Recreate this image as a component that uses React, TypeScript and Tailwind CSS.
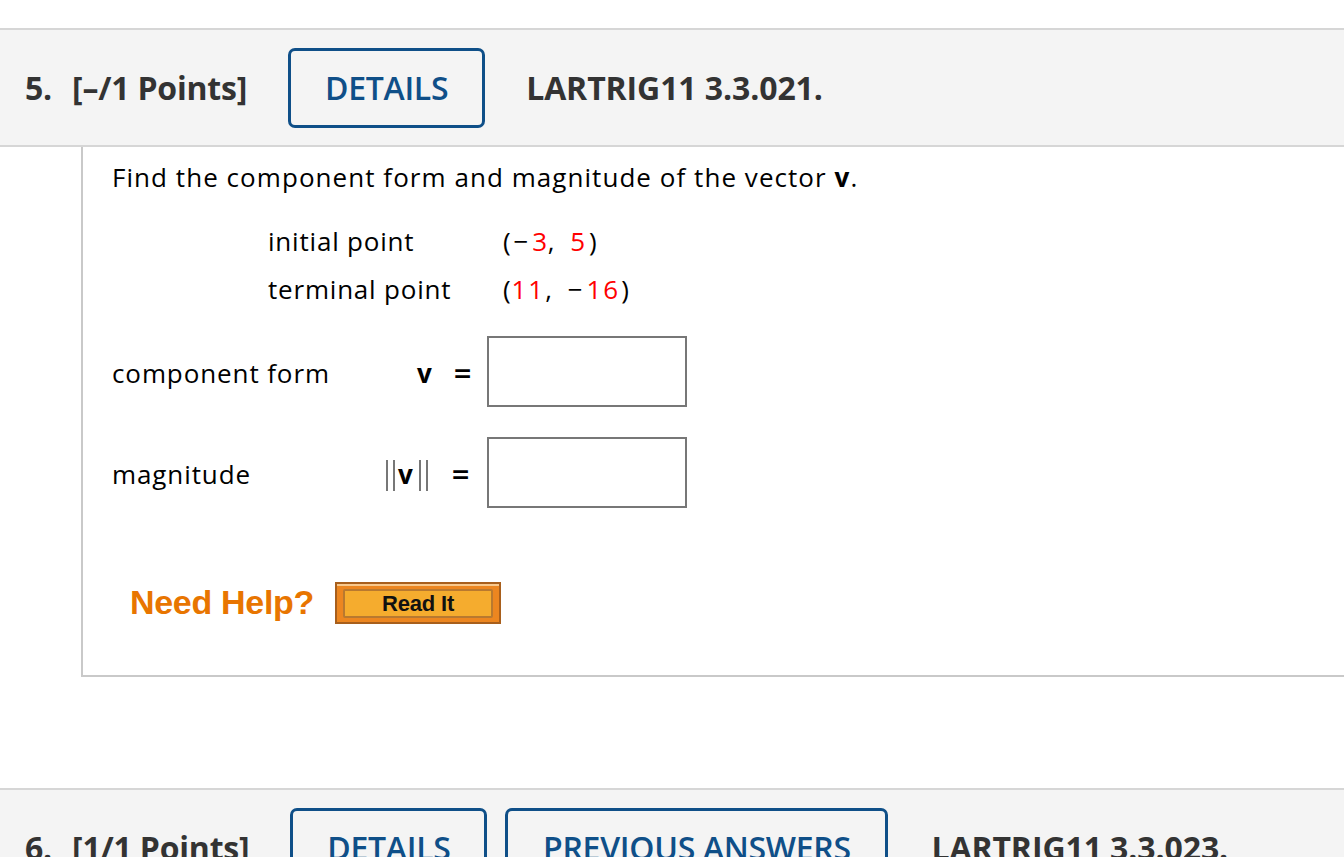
import React from "react";

function Header({ num, points, buttons, code, top }: { num: string; points: string; buttons: { label: string; w: string }[]; code: string; top: boolean }) {
  return (
    <div
      className={`bg-[#f4f4f4] border-t-2 border-[#d6d6d6] flex pl-[25px] font-['Open_Sans','Noto_Sans',sans-serif] ${top ? "h-[119px] border-b-2 items-center" : "h-[120px] items-start pt-[18px]"}`}
    >
      <div className={`flex items-center ${top ? "" : "h-[80px]"}`}>
        <span className="text-[32px] font-bold text-[#333] tracking-[-0.2px] whitespace-nowrap">{num}</span>
        <span className="text-[32px] font-bold text-[#333] tracking-[-0.2px] ml-[20px] whitespace-nowrap">{points}</span>
      </div>
      {buttons.map((b, i) => (
        <div
          key={i}
          className={`${b.w} h-[80px] border-[3px] border-[#0f4f88] rounded-[7px] flex items-center justify-center text-[32px] font-semibold text-[#0f4f88] tracking-[-0.3px] ${i === 0 ? "ml-[41px]" : "ml-[18px]"}`}
        >
          {b.label}
        </div>
      ))}
      <div className={`flex items-center ${top ? "ml-[41px]" : "ml-[43px] h-[80px]"}`}>
        <span className="text-[32px] font-bold text-[#333] tracking-[-0.1px] whitespace-nowrap">{code}</span>
      </div>
    </div>
  );
}

function Bars() {
  return (
    <span className="flex gap-[5px] h-[31px] mt-[2px]">
      <span className="w-[2px] bg-[#777]" />
      <span className="w-[2px] bg-[#777]" />
    </span>
  );
}

export default function App() {
  return (
    <div className="w-[1344px] h-[857px] bg-white overflow-hidden">
      <div className="h-[28px]" />
      <Header
        num="5."
        points="[–/1 Points]"
        buttons={[{ label: "DETAILS", w: "w-[197px]" }]}
        code="LARTRIG11 3.3.021."
        top
      />
      <div className="ml-[81px] border-l-2 border-b-2 border-[#c9c9c9] h-[530px] pl-[29px] pt-[13px] text-[26px] text-black font-['Open_Sans','Noto_Sans',sans-serif]">
        <div className="h-[34px] flex items-center tracking-[1.05px]">
          Find the component form and magnitude of the vector&nbsp;<b>v</b>.
        </div>
        <div className="ml-[156px] mt-[30px] grid grid-cols-[235px_auto] gap-y-[14px] tracking-[0.8px]">
          <div className="h-[34px] flex items-center">initial point</div>
          <div className="h-[34px] flex items-center">
            (<span className="ml-[2px] mr-[3px]">−</span><span className="text-[#f00]">3</span>,<span className="w-[15px]" /><span className="text-[#f00]">5</span><span className="ml-[3px]">)</span>
          </div>
          <div className="h-[34px] flex items-center">terminal point</div>
          <div className="h-[34px] flex items-center">
            (<span className="text-[#f00] tracking-[2px]">11</span>,<span className="w-[15px]" /><span className="mr-[3px]">−</span><span className="text-[#f00] tracking-[2px]">16</span><span className="ml-[1px]">)</span>
          </div>
        </div>
        <div className="mt-[30px] flex items-center h-[71px]">
          <div className="w-[305px] pt-[4px] tracking-[0.9px]">component form</div>
          <div className="w-[70px] flex items-center pt-[4px]">
            <b>v</b>
            <span className="ml-[22px] text-[31px] font-semibold leading-none">=</span>
          </div>
          <div className="w-[200px] h-[71px] border-2 border-[#777] bg-white" />
        </div>
        <div className="mt-[30px] flex items-center h-[71px]">
          <div className="w-[273px] pt-[4px] tracking-[0.9px]">magnitude</div>
          <div className="w-[102px] flex items-center pt-[4px]">
            <span className="ml-[1px] flex"><Bars /></span>
            <b className="ml-[3px] mr-[6px]">v</b>
            <Bars />
            <span className="ml-[24px] text-[31px] font-semibold leading-none">=</span>
          </div>
          <div className="w-[200px] h-[71px] border-2 border-[#777] bg-white" />
        </div>
        <div className="mt-[69px] ml-[18px] flex items-center font-['Liberation_Sans',Arial,sans-serif]">
          <span className="text-[34px] font-bold text-[#e87500] tracking-[-0.3px]">Need Help?</span>
          <div className="ml-[21px] w-[166px] h-[42px] bg-[#ec8620] border-2 border-[#a85f1c] pt-[5px] px-[6px] pb-[4px] flex shadow-[inset_0_2px_0_#f8c98e]">
            <div className="flex-1 bg-[#f5ac2e] border-2 border-[#b9792f] rounded-[2px] flex items-center justify-center text-[22px] font-bold text-[#111] tracking-[-0.2px]">
              Read It
            </div>
          </div>
        </div>
      </div>
      <div className="h-[111px]" />
      <Header
        num="6."
        points="[1/1 Points]"
        buttons={[
          { label: "DETAILS", w: "w-[197px]" },
          { label: "PREVIOUS ANSWERS", w: "w-[383px]" },
        ]}
        code="LARTRIG11 3.3.023."
        top={false}
      />
    </div>
  );
}
